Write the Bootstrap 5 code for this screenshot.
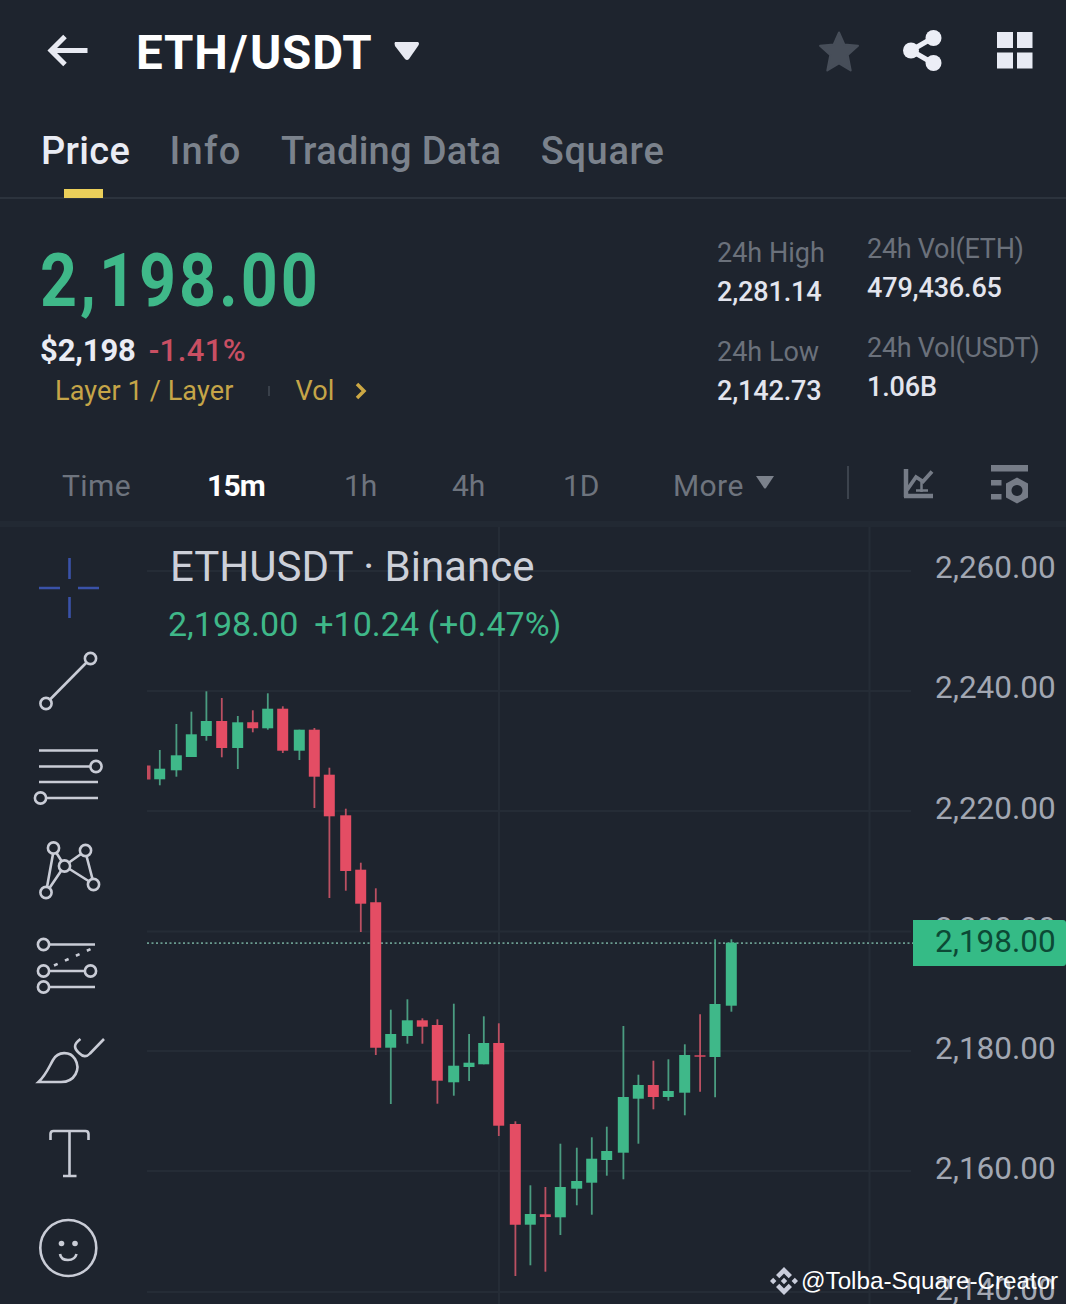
<!DOCTYPE html>
<html lang="en">
<head>
<meta charset="utf-8">
<meta name="viewport" content="width=device-width, initial-scale=1">
<title>ETH/USDT</title>
<link href="https://cdn.jsdelivr.net/npm/bootstrap@5.3.0/dist/css/bootstrap.min.css" rel="stylesheet">
<style>
:root{--bg:#1e242e;--up:#3fb889;--down:#e44d64;--lite:#eaecf4}
html,body{height:1304px;overflow:hidden}
body{background:var(--bg);color:var(--lite);font-family:Roboto,"Liberation Sans",sans-serif;width:1066px;line-height:1}
svg{display:block;flex:none}
.topbar{height:100px;padding:2px 32px 0 47px}
.pair{font-size:47.5px;font-weight:700;color:#fff;line-height:100px;margin:3px 0 0 47px;width:271px;letter-spacing:.8px}
.pair i{font-style:normal;margin:0 1.500px}
.tabs{height:99px;padding-left:41px;gap:39.4px;border-bottom:2px solid #2c333d;font-size:38px;font-weight:500;color:#7b828c;letter-spacing:.3px}
.tabs a{color:inherit;text-decoration:none;line-height:102px;height:97px;position:relative;white-space:nowrap}
.tabs a.active{color:var(--lite)}
.tabs a.active::after{content:"";position:absolute;left:23px;bottom:-1px;width:39px;height:9px;background:#ebcf5a}
.tabs .t-info{letter-spacing:1.300px}
.tabs .t-square{letter-spacing:.7px}
.summary{height:249px;padding-left:40px}
.quote{width:677px}
.big{font-size:75px;font-weight:700;color:var(--up);height:74px;line-height:74px;margin-top:44px}
.big span{display:inline-block;transform-origin:0 50%;white-space:nowrap;transform:scaleX(.86);letter-spacing:3.500px}
.sub{font-size:31px;height:32px;line-height:32px;margin-top:18px}
.sub b{letter-spacing:-.15px}
.chg{color:#c94f63;margin-left:13px;font-weight:500;letter-spacing:.4px}
.tagsrow{font-size:27px;color:#c5a548;height:32px;line-height:32px;margin:8px 0 0 15px;letter-spacing:.12px}
.sep{width:2px;height:10px;background:#39404a;margin:0 25px 0 35px}
.chev{margin-left:20px}
.stat{font-size:27px;line-height:32px}
.stat dt{font-weight:400;color:#6b717b;margin-bottom:7px}
.stat dd{font-weight:500;margin-bottom:28px;color:#e3e5ee;letter-spacing:-.15px}
.stat dt,.stat dd{height:32px;white-space:nowrap}
.s1{width:150px;padding-top:38px}
.s2{padding-top:34px}
.s2 dt{letter-spacing:-.28px}
.frames{display:grid;grid-template-columns:145px 137px 108px 111px 110px 174px 55px 88px auto;padding-left:62px;height:73px;font-size:30px;line-height:75px;color:#6e747e}
.frames b{color:#fff;font-weight:700;letter-spacing:-.8px}
.frames span:first-child,.frames span:nth-child(6){letter-spacing:.4px}
.chart{height:783px;border-top:6px solid #222933}
.tools{width:147px;padding-top:14px}
.tools svg{fill:none;stroke:#c9ccd6;stroke-width:2.6}
.plot{width:766px}
.legend{left:170px;top:0}
.lg1{font-size:42px;line-height:50px;margin-top:15px;color:#cdd0d9;white-space:nowrap}
.lg2{font-size:34px;line-height:40px;margin:12px 0 0 -2px;color:var(--up);white-space:nowrap}
.lg3{margin-left:16px}
.axis{width:153px;font-size:31.500px;color:#a2a7b2;padding-left:22px}
.axis div{height:120.25px;line-height:82px;white-space:nowrap}
.last{left:913px;top:393px;width:153px;height:46px;line-height:44px;background:#35bb86;color:#0c4935;font-size:31.500px;padding-left:22px;border-radius:0 3px 3px 0}
.wm{left:770px;top:739px;font:24.2px/30px "Liberation Sans",Arial,sans-serif;color:#fff}
.wm span{margin-left:3px}
</style>
</head>
<body>
<header class="topbar d-flex align-items-center">
  <svg width="42" height="36" viewBox="46 33 42 36" fill="none" stroke="#e8eaf2" stroke-width="5"><path d="M86.500 50.500H50M64 36.500L50 50.500l14 14"/></svg>
  <div class="pair">ETH<i>/</i>USDT</div>
  <svg width="26" height="20" viewBox="394 40 26 20" style="margin-left:-13px" fill="#e8eaf2"><path d="M395 41h23q2 1 0 4L409 58q-2 2-4 0L395 45q-1-3 0-4z"/></svg>
  <div class="d-flex align-items-center ms-auto">
    <svg width="42" height="44" viewBox="818 28 42 44" fill="#474e59" stroke="#474e59" stroke-width="2" stroke-linejoin="round"><path d="M839 31.500l5.300 12 13.700 1.300-10.300 9.100 3 15.500-11.700-7-11.700 7 3-15.500L820 44.800l13.700-1.300z"/></svg>
    <svg width="44" height="44" viewBox="901 28 44 44" style="margin-left:41px" fill="#eceef6"><path d="M933.500 36.500L911 49.500l22.500 13" fill="none" stroke="#eceef6" stroke-width="5"/><circle cx="933.500" cy="37" r="8"/><circle cx="911" cy="49.500" r="8"/><circle cx="933.500" cy="62" r="8"/></svg>
    <svg width="38" height="44" viewBox="997 28 38 44" style="margin-left:51px" fill="#e8ebf4"><path d="M998 31h16v16h-16zm20 0h15.500v16H1018zm-20 20.500h16v16h-16zm20 0h15.500v16H1018z"/></svg>
  </div>
</header>
<nav class="tabs d-flex">
  <a class="active" href="#">Price</a><a class="t-info" href="#">Info</a><a href="#">Trading Data</a><a class="t-square" href="#">Square</a>
</nav>
<section class="summary d-flex">
  <div class="quote">
    <div class="big"><span>2,198.00</span></div>
    <div class="sub d-flex"><b>$2,198</b><span class="chg">-1.41%</span></div>
    <div class="tagsrow d-flex align-items-center"><span>Layer 1 / Layer</span><i class="sep"></i><span>Vol</span>
      <svg width="14" height="18" viewBox="0 0 14 18" class="chev" fill="none" stroke="#cda844" stroke-width="3.500"><path d="M3 2l7 7-7 7"/></svg></div>
  </div>
  <dl class="stat s1 mb-0"><dt>24h High</dt><dd>2,281.14</dd><dt>24h Low</dt><dd>2,142.73</dd></dl>
  <dl class="stat s2 mb-0"><dt>24h Vol(ETH)</dt><dd>479,436.65</dd><dt>24h Vol(USDT)</dt><dd>1.06B</dd></dl>
</section>
<nav class="frames">
  <span>Time</span><b>15m</b><span>1h</span><span>4h</span><span>1D</span>
  <span class="d-flex align-items-center">More<svg width="20" height="16" viewBox="0 0 20 16" style="margin:-5px 0 0 11px" fill="#7b818b"><path d="M1 1h18l-8 12q-1 1-2 0z"/></svg></span>
  <svg width="3" height="36" viewBox="0 0 3 36" style="margin-top:17px"><path d="M1 1v33" stroke="#3c434d" stroke-width="2"/></svg>
  <svg width="32" height="34" viewBox="902 465 32 34" style="margin-top:18px" fill="none" stroke="#767c87"><path d="M906 468v28M904 495h29" stroke-width="4.500"/><path d="M907 489l9-13 7 4.500 9-10" stroke-width="3.800"/><path d="M921.500 481v10M916 489.500h12" stroke-width="2.500"/></svg>
  <svg width="40" height="40" viewBox="990 464 40 40" style="margin-top:16px" fill="#767c87"><path d="M991 465h37v6.500h-37zM991 480h10.500v5.500H991zM991 494h10.500v5.500H991z"/><path fill-rule="evenodd" d="M1017 477.500l11 6v14l-11 6-11-6v-14zM1017 485a5.500 5.500 0 1 0 .01 0z"/></svg>
</nav>
<main class="chart d-flex position-relative">
  <div class="tools">
    <svg width="147" height="94" viewBox="0 541 147 94" style="stroke:#3a52a8"><path d="M69.500 558v21M69.500 597v21M39 588h21M78 588h21"/></svg>
    <svg width="147" height="94" viewBox="0 635 147 94"><circle cx="90.500" cy="658.500" r="5.600"/><circle cx="46" cy="703.500" r="5.600"/><path d="M86.500 662.500L50 699.500"/></svg>
    <svg width="147" height="94" viewBox="0 729 147 94"><path d="M39 750.500h59M39 766.500h51M39 782h59M46 798h52"/><circle cx="96" cy="766.500" r="5.600"/><circle cx="40.500" cy="798" r="5.600"/></svg>
    <svg width="147" height="94" viewBox="0 823 147 94"><circle cx="53.500" cy="848" r="5.600"/><circle cx="85.500" cy="850.500" r="5.600"/><circle cx="64.500" cy="866" r="5.600"/><circle cx="93.500" cy="884.500" r="5.600"/><circle cx="46" cy="892.500" r="5.600"/><path d="M53 854l-6 33M56.500 853l5 8M81 854l-12 8.500M69.500 869l19 12M61 871l-11.500 17M86.500 856l6 23"/></svg>
    <svg width="147" height="94" viewBox="0 917 147 94"><circle cx="43.500" cy="944.500" r="5.600"/><circle cx="43.500" cy="971" r="5.600"/><circle cx="90.500" cy="971" r="5.600"/><circle cx="43.500" cy="987" r="5.600"/><path d="M49 944.500h46M49 971h36M49 987h46"/><path d="M54 965.500l38-17" stroke-dasharray="4 8"/></svg>
    <svg width="147" height="94" viewBox="0 1011 147 94"><path d="M38.500 1082C46 1075 49 1067 53 1060C58 1051 70 1051 75 1059C81 1069 75 1082 61 1082ZM80.500 1039C73.500 1044 73.500 1048 79 1053Q85 1059 90 1053.500L104 1039"/></svg>
    <svg width="147" height="94" viewBox="0 1105 147 94"><path d="M50.500 1140v-6q0-3 3-3h32q3 0 3 3v6M69.500 1131v45M63 1176h13.500"/></svg>
    <svg width="147" height="94" viewBox="0 1199 147 94"><circle cx="68.300" cy="1248" r="28"/><path d="M60 1254q1 6 8 6t8.500-6"/><g fill="#c9ccd6" stroke="none"><circle cx="61.500" cy="1243.500" r="2.800"/><circle cx="75" cy="1243.500" r="2.800"/></g></svg>
  </div>
  <svg class="plot" id="plot" width="766" height="777" viewBox="147 527 766 777"></svg>
  <div class="axis"><div>2,260.00</div><div>2,240.00</div><div>2,220.00</div><div>2,200.00</div><div>2,180.00</div><div>2,160.00</div><div>2,140.00</div></div>
  <div class="legend position-absolute"><div class="lg1">ETHUSDT · Binance</div><div class="lg2"><span>2,198.00</span><span class="lg3">+10.24 (+0.47%)</span></div></div>
  <div class="last position-absolute">2,198.00</div>
  <div class="wm position-absolute d-flex align-items-center"><svg width="28" height="28" viewBox="0 0 28 28" fill="#c9cddb"><path d="M14 0l8 8-3.300 3.300L14 6.600l-4.700 4.700L6 8zM14 28l8-8-3.300-3.300L14 21.400l-4.700-4.700L6 20zM3.200 10.800L6.400 14l-3.200 3.200L0 14zM24.800 10.800L28 14l-3.200 3.200-3.200-3.200zM14 10.800l3.200 3.200-3.200 3.200-3.200-3.200z"/></svg><span>@Tolba-Square-Creator</span></div>
</main>
<script>
// centre x, high, body top, body bottom, low, rising
const candles=[
[159.7,750,768.7,779.3,785.3,1],[176.3,724,755.3,770.3,776.7,1],[191.3,711.7,734.3,757,757,1],[206.3,691.3,721,736,740.7,1],
[221.7,698,721,748,757.3,0],[237.7,716,722.3,748,769,1],[252.7,710.3,722.3,728.3,732.3,0],[267.7,693.3,708.7,728.3,729.7,1],
[282.7,706.3,708.7,750.7,753,0],[299.3,729.7,729.7,750.7,760,1],[314.3,728,729.7,776.7,808,0],[329.3,767.7,774.7,816.3,898,0],
[345.7,808.7,815.3,871,890.7,0],[360.7,862.7,869.7,903.7,932,0],[375.7,888.3,902.3,1047.7,1055,0],[390.7,1009.7,1034,1047.7,1104,1],
[407.3,999.3,1020.3,1036,1043.7,1],[422.3,1018.3,1020.3,1026.7,1043.7,0],[437.3,1019.3,1025,1080.7,1103.7,0],[453.7,1003.7,1065.7,1082.3,1095.7,1],
[469,1034,1062.7,1067,1081,1],[483.7,1016.3,1043,1064.3,1064.3,1],[498.7,1023.3,1043,1125.7,1136,0],[515.3,1121.3,1124,1224.7,1276,0],
[530.3,1185.3,1214,1224.7,1265.3,1],[545.3,1187,1214.3,1217,1271.7,0],[560.3,1143.7,1187,1217.3,1235,1],[576.7,1147.7,1181,1188.7,1205.3,1],
[591.7,1137.3,1158.7,1182.7,1214.7,1],[606.7,1126.7,1151,1160,1175.7,1],[623.3,1026,1097,1152.7,1179.3,1],[638.3,1074.7,1085,1098.7,1143.7,1],
[653.3,1060.7,1085,1097,1109.3,0],[668.3,1059.3,1091,1097,1100.7,1],[684.7,1044.3,1055,1092.7,1115.3,1],[700,1014.3,1055.3,1056.7,1091.7,0],
[715,939.3,1004,1057,1097.3,1],[731.3,939.3,942.7,1005.7,1011.7,1]];
let s='<path stroke="#252c36" stroke-width="2" d="';
[571,691,811,931.5,1051,1171,1292].forEach(y=>s+=`M147 ${y}H911`);
s+='M499 527V1304M869.5 527V1304"/><path stroke="#6b9c90" stroke-width="1.7" stroke-dasharray="2 2.5" d="M147 943.2H913"/><path fill="#c24a5c" d="M147 765.500h3.500v14h-3.500z"/>';
for(const [x,h,t,b,l,up] of candles){const c=up?'#3fb889':'#e44d64',w=up?'#4a9c80':'#bb5062';
s+=`<path fill="${w}" d="M${x-.8} ${h}h1.8V${l}h-1.8z"/><path fill="${c}" d="M${x-5.5} ${t}h11V${b}h-11z"/>`}
document.getElementById('plot').innerHTML=s;
</script>
<script src="https://cdn.jsdelivr.net/npm/bootstrap@5.3.0/dist/js/bootstrap.bundle.min.js"></script>
</body>
</html>
